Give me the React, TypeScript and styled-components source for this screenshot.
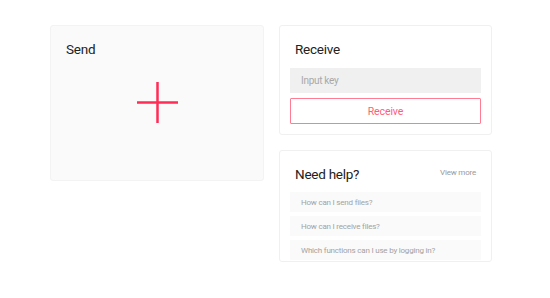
import React from "react";
import styled, { createGlobalStyle } from "styled-components";

const GlobalStyle = createGlobalStyle`
  html, body {
    margin: 0;
    padding: 0;
    background: #ffffff;
    font-family: Roboto, "Liberation Sans", sans-serif;
  }
  * {
    box-sizing: border-box;
  }
`;

const Page = styled.div`
  display: flex;
  align-items: flex-start;
  gap: 15px;
  padding: 25px 0 0 50px;
`;

const SendCard = styled.div`
  width: 214px;
  height: 156px;
  display: grid;
  grid-template-areas: "stack";
  background: #fafafa;
  border: 1px solid #f3f3f3;
  border-radius: 3px;
  padding: 15px 15px;
  > * {
    grid-area: stack;
  }
`;

const Column = styled.div`
  width: 213px;
  display: flex;
  flex-direction: column;
  gap: 15px;
`;

const Card = styled.div<{ $bottom?: number }>`
  display: flex;
  flex-direction: column;
  background: #ffffff;
  border: 1px solid #f0f0f0;
  border-radius: 3px;
  padding: 15px 10px ${(p) => p.$bottom ?? 10}px 10px;
`;

const Title = styled.div`
  font-size: 13.5px;
  line-height: 16px;
  letter-spacing: -0.25px;
  color: #222222;
  align-self: start;
`;

const CardHeader = styled.div<{ $gap: number }>`
  display: flex;
  justify-content: space-between;
  align-items: flex-start;
  padding: 0 5px;
  margin-bottom: ${(p) => p.$gap}px;
`;

const PlusWrap = styled.div`
  place-self: center;
  width: 41px;
  height: 41px;
  margin-top: -2px;
`;

const KeyInput = styled.input`
  height: 25px;
  border: none;
  outline: none;
  background: #f0f0f0;
  padding: 0 11px;
  font-family: inherit;
  font-size: 10px;
  letter-spacing: -0.3px;
  color: #555;
  &::placeholder {
    color: #a8a8a8;
  }
`;

const ReceiveButton = styled.button`
  margin-top: 5px;
  height: 26px;
  background: #ffffff;
  border: 1px solid #ff7c93;
  border-radius: 1px;
  color: #ff5d7a;
  font-family: inherit;
  font-size: 10.5px;
  letter-spacing: -0.1px;
  cursor: pointer;
`;

const ViewMore = styled.a`
  margin-top: 2px;
  font-size: 8px;
  line-height: 10px;
  letter-spacing: -0.2px;
  color: #9a9a9a;
  text-decoration: none;
  cursor: pointer;
`;

const HelpList = styled.div`
  display: flex;
  flex-direction: column;
  gap: 4px;
`;

const HelpRow = styled.div`
  height: 20px;
  display: flex;
  align-items: center;
  padding: 0 11px;
  background: #fafafa;
  font-size: 8px;
  letter-spacing: -0.2px;
  color: #a2a2a2;
  cursor: pointer;
`;

const questions = [
  "How can I send files?",
  "How can I receive files?",
  "Which functions can I use by logging in?",
];

const Plus = () => (
  <svg width="41" height="41" viewBox="0 0 41 41">
    <path d="M20.5 0V41M0 20.5H41" stroke="#ff2d55" strokeWidth="2.5" />
  </svg>
);

export default function App() {
  return (
    <>
      <GlobalStyle />
      <Page>
        <SendCard>
          <Title>Send</Title>
          <PlusWrap>
            <Plus />
          </PlusWrap>
        </SendCard>
        <Column>
          <Card>
            <CardHeader $gap={11}>
              <Title>Receive</Title>
            </CardHeader>
            <KeyInput placeholder="Input key" />
            <ReceiveButton>Receive</ReceiveButton>
          </Card>
          <Card $bottom={1}>
            <CardHeader $gap={10}>
              <Title>Need help?</Title>
              <ViewMore>View more</ViewMore>
            </CardHeader>
            <HelpList>
              {questions.map((q) => (
                <HelpRow key={q}>{q}</HelpRow>
              ))}
            </HelpList>
          </Card>
        </Column>
      </Page>
    </>
  );
}
